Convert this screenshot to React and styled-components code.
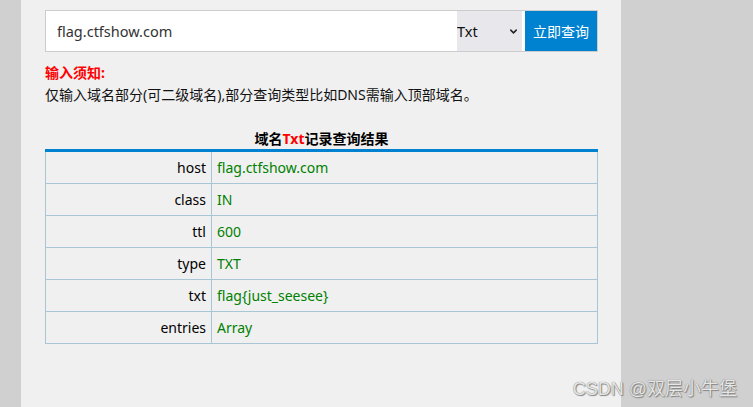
import React, { useState } from "react";
import styled, { createGlobalStyle } from "styled-components";
import { ChevronDown } from "lucide-react";

const GlobalStyle = createGlobalStyle`
  html, body {
    margin: 0;
    padding: 0;
    background: #d0d0d0;
    font-family: "Noto Sans", "Noto Sans CJK SC", sans-serif;
  }
`;

const records = [
  { key: "host", value: "flag.ctfshow.com" },
  { key: "class", value: "IN" },
  { key: "ttl", value: "600" },
  { key: "type", value: "TXT" },
  { key: "txt", value: "flag{just_seesee}" },
  { key: "entries", value: "Array" },
];

function App() {
  const [domain, setDomain] = useState("flag.ctfshow.com");
  const [type, setType] = useState("Txt");

  return (
    <>
      <GlobalStyle />
      <Page>
        <Panel>
          <SearchGroup>
            <DomainInput value={domain} onChange={(e) => setDomain(e.target.value)} />
            <SelectWrapper>
              <TypeSelect value={type} onChange={(e) => setType(e.target.value)}>
                <option>A</option>
                <option>CNAME</option>
                <option>MX</option>
                <option>NS</option>
                <option>Txt</option>
              </TypeSelect>
              <Chevron size={11} strokeWidth={3.2} />
            </SelectWrapper>
            <SearchButton>立即查询</SearchButton>
          </SearchGroup>

          <NoticeTitle>输入须知:</NoticeTitle>
          <NoticeText>仅输入域名部分(可二级域名),部分查询类型比如DNS需输入顶部域名。</NoticeText>

          <Caption>
            域名<Red>Txt</Red>记录查询结果
          </Caption>
          <ResultTable>
            <tbody>
              {records.map((r) => (
                <tr key={r.key}>
                  <KeyCell>{r.key}</KeyCell>
                  <ValueCell>{r.value}</ValueCell>
                </tr>
              ))}
            </tbody>
          </ResultTable>
        </Panel>
        <Watermark>CSDN @双层小牛堡</Watermark>
      </Page>
    </>
  );
}

const Page = styled.div`
  position: relative;
  height: 407px;
  overflow: hidden;
`;

const Panel = styled.div`
  margin-left: 21px;
  width: 600px;
  height: 100%;
  box-sizing: border-box;
  padding: 10px 23px 0 24px;
  background: #f0f0f0;
`;

const SearchGroup = styled.div`
  display: flex;
  height: 42px;
  box-sizing: border-box;
  border: 1px solid #cccccc;
  background: #ffffff;
`;

const DomainInput = styled.input`
  flex: 1;
  min-width: 0;
  border: none;
  outline: none;
  padding: 0 0 0 11px;
  font-family: "Noto Sans", "Noto Sans CJK SC", sans-serif;
  font-size: 14.5px;
  color: #333;
  background: #fff;
`;

const SelectWrapper = styled.div`
  position: relative;
  width: 65px;
  background: #e8e8ec;
`;

const TypeSelect = styled.select`
  appearance: none;
  width: 100%;
  height: 100%;
  border: none;
  outline: none;
  padding: 0;
  background: transparent;
  font-family: "Noto Sans", "Noto Sans CJK SC", sans-serif;
  font-size: 14.5px;
  color: #111;
`;

const Chevron = styled(ChevronDown)`
  position: absolute;
  right: 3px;
  top: 15px;
  color: #222;
  pointer-events: none;
`;

const SearchButton = styled.button`
  width: 72px;
  margin-left: 3px;
  border: none;
  background: #0082d0;
  color: #ffffff;
  font-family: "Noto Sans CJK SC", sans-serif;
  font-size: 14px;
  padding: 0;
  cursor: pointer;
`;

const NoticeTitle = styled.div`
  margin-top: 10px;
  line-height: 22px;
  font-size: 14px;
  font-weight: bold;
  color: #ff0000;
`;

const NoticeText = styled.div`
  line-height: 22px;
  font-size: 14px;
  color: #111;
`;

const Caption = styled.div`
  margin-top: 22px;
  line-height: 21px;
  text-align: center;
  font-size: 14px;
  font-weight: bold;
  color: #000;
`;

const Red = styled.span`
  color: #ff0000;
`;

const ResultTable = styled.table`
  width: 553px;
  border-collapse: collapse;
  border-top: 3px solid #0082d0;
  font-size: 14px;
`;

const Cell = styled.td`
  height: 31px;
  padding: 0;
  border: 1px solid #a9c6d6;
  border-top: none;
`;

const KeyCell = styled(Cell)`
  width: 160px;
  padding-right: 5px;
  text-align: right;
  color: #000;
`;

const ValueCell = styled(Cell)`
  padding-left: 5px;
  color: #008000;
`;

const Watermark = styled.div`
  position: absolute;
  right: 16px;
  bottom: 7px;
  font-family: "Liberation Sans", "Noto Sans CJK SC", sans-serif;
  font-size: 18px;
  color: #e6e6e6;
  text-shadow: 0 0 1px #666, 1px 1px 1px #888;
`;

export default App;
